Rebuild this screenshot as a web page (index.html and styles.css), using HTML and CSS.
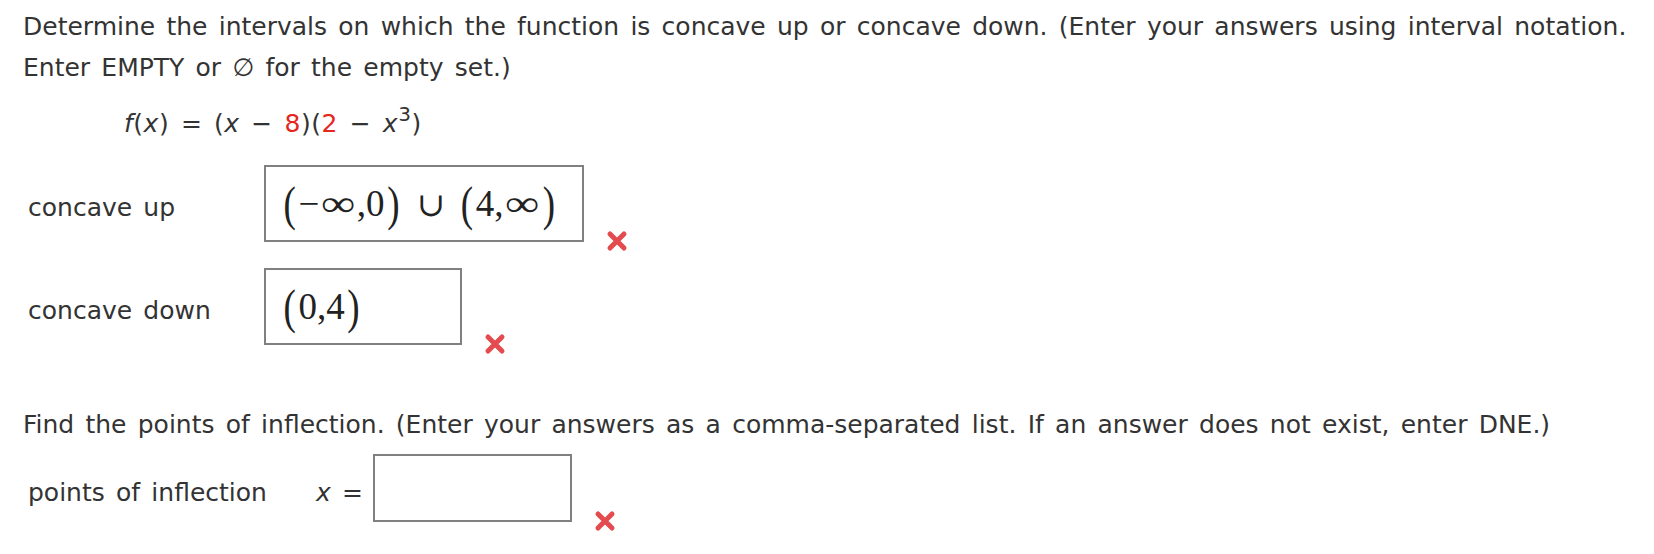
FILE: index.html
```html
<!DOCTYPE html>
<html>
<head>
<meta charset="utf-8">
<link rel="stylesheet" href="styles.css">
</head>
<body>
<p class="intro">Determine the intervals on which the function is concave up or concave down. (Enter your answers using interval notation.<br>Enter EMPTY or ∅ for the empty set.)</p>
<p class="formula"><i>f</i>(<i>x</i>) = (<i>x</i> − <span class="red">8</span>)(<span class="red">2</span> − <i>x</i><sup>3</sup>)</p>

<div class="row row-up">
  <div class="label">concave up</div>
  <div class="box box-tall box-wide"><span class="math"><span class="paren">(</span><span class="minus">−</span><span class="inf">∞</span>,0<span class="paren">)</span><span class="op">∪</span><span class="paren">(</span>4,<span class="inf">∞</span><span class="paren">)</span></span></div>
  <svg class="mark" viewBox="0 0 22 22"><path d="M4 4 L18 18 M18 4 L4 18"/></svg>
</div>

<div class="row row-down">
  <div class="label">concave down</div>
  <div class="box box-tall"><span class="math"><span class="paren">(</span>0,4<span class="paren">)</span></span></div>
  <svg class="mark" viewBox="0 0 22 22"><path d="M4 4 L18 18 M18 4 L4 18"/></svg>
</div>

<p class="find">Find the points of inflection. (Enter your answers as a comma-separated list. If an answer does not exist, enter DNE.)</p>

<div class="row row-pts">
  <div class="label label-wide">points of inflection</div>
  <div class="eq"><i>x</i> =</div>
  <div class="box box-short"></div>
  <svg class="mark" viewBox="0 0 22 22"><path d="M4 4 L18 18 M18 4 L4 18"/></svg>
</div>
</body>
</html>
```

FILE: styles.css
```css
html, body {
  background: #ffffff;
}
body {
  box-sizing: border-box;
  min-height: 554px;
  margin: 0;
  padding: 6px 0 30px 23px;
  font-family: "DejaVu Sans", Verdana, sans-serif;
  font-size: 25px;
  line-height: 41px;
  word-spacing: 3.3px;
  color: #333333;
}
p {
  margin: 0;
}
.formula {
  margin: 15px 0 0 101px;
  letter-spacing: 0.5px;
}
.formula sup {
  font-size: 0.8em;
  line-height: 0;
  vertical-align: 0.55em;
}
.red {
  color: #e4261d;
}
.row {
  display: flex;
  align-items: center;
  margin-left: 5px;
}
.row-up {
  margin-top: 21px;
}
.row-down {
  margin-top: 26px;
}
.label {
  width: 236px;
  padding-top: 8px;
}
.label-wide {
  width: 288px;
}
.eq {
  padding-top: 8px;
  margin-right: 10px;
}
.box {
  box-sizing: border-box;
  border: 2px solid #808080;
  min-width: 198px;
  display: flex;
  align-items: center;
  padding: 0 18px 0 15px;
}
.box-wide {
  padding-right: 24px;
}
.box-tall {
  height: 77px;
}
.box-short {
  height: 68px;
  width: 199px;
}
.math {
  font-family: "Liberation Serif", "DejaVu Serif", "Times New Roman", serif;
  font-size: 37px;
  line-height: 1;
  color: #222222;
  white-space: nowrap;
}
.paren {
  display: inline-block;
  transform: scaleY(1.3);
  margin: 0 0.07em;
}
.minus {
  margin-right: 0.02em;
}
.inf {
  display: inline-block;
  transform: scaleX(1.3);
  margin: 0 0.14em;
}
.op {
  font-family: "DejaVu Serif", serif;
  font-size: 0.9em;
  margin: 0 0.4em 0 0.45em;
}
.mark {
  align-self: flex-end;
  flex: none;
  width: 22px;
  height: 22px;
  margin: 0 0 -10px 22px;
}
.mark path {
  stroke: #e34b4f;
  stroke-width: 5;
  stroke-linecap: round;
  fill: none;
}
.find {
  margin-top: 59px;
}
.row-pts {
  margin-top: 9px;
}
```
